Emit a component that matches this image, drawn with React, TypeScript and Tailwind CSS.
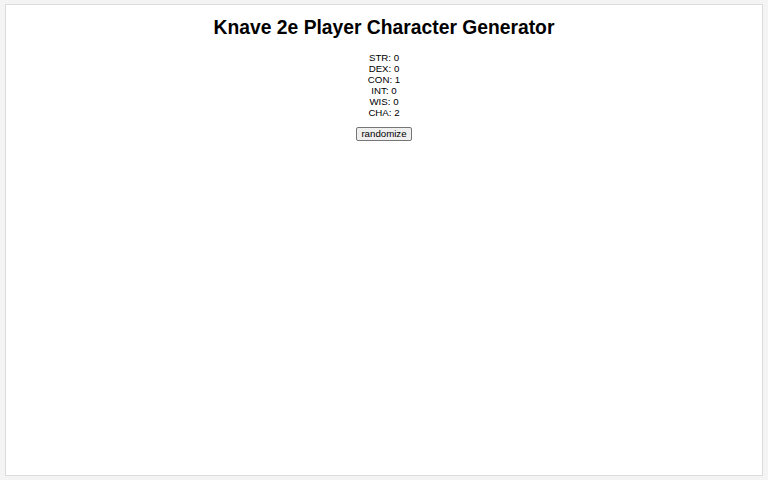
import React, { useState } from "react";

const STATS = ["STR", "DEX", "CON", "INT", "WIS", "CHA"];

export default function App() {
  const [scores, setScores] = useState<number[]>([0, 0, 1, 0, 0, 2]);

  const randomize = () => {
    setScores(
      STATS.map(() => {
        const rolls = [0, 0, 0].map(() => 1 + Math.floor(Math.random() * 6));
        return Math.min(...rolls);
      })
    );
  };

  return (
    <div
      className="min-h-[480px] bg-[#f4f4f4] p-[4px_5px_4px_5px]"
      style={{ fontFamily: '"Liberation Sans", Arial, sans-serif' }}
    >
      <div className="h-[472px] bg-white border border-[#dcdcdc] flex flex-col items-center text-black">
        <h1 className="mt-[11px] text-[19.3px] leading-[24px] font-bold">
          Knave 2e Player Character Generator
        </h1>
        <div className="mt-[12px] flex flex-col items-center text-[9.7px] leading-[11px]">
          {STATS.map((s, i) => (
            <div key={s}>
              {s}: {scores[i]}
            </div>
          ))}
        </div>
        <button
          onClick={randomize}
          className="mt-[9px] px-[4px] h-[14px] text-[9.7px] leading-[12px] bg-[#efefef] border border-[#767676] rounded-[2px]"
        >
          randomize
        </button>
      </div>
    </div>
  );
}
